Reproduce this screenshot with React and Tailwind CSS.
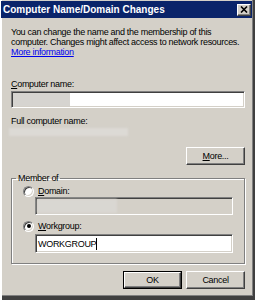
import React from 'react';

const font = { fontFamily: '"Liberation Sans", Arial, sans-serif' };

const sunken = 'border border-t-[#808080] border-l-[#808080] border-b-white border-r-white shadow-[inset_1px_1px_0_#404040,inset_-1px_-1px_0_#d4d0c8]';
const raised = 'border border-t-white border-l-white border-b-[#404040] border-r-[#404040] shadow-[inset_-1px_-1px_0_#808080]';
const txt = 'text-[9px] leading-[10px] tracking-[-0.3px] whitespace-nowrap';

const Radio = ({ checked }) => (
  <span className="w-[11px] h-[11px] rounded-full bg-white border border-t-[#808080] border-l-[#808080] border-b-white border-r-white shadow-[inset_1px_1px_0_#404040,inset_-1px_-1px_0_#d4d0c8] flex items-center justify-center shrink-0">
    {checked && <span className="w-[4px] h-[4px] rounded-full bg-black" />}
  </span>
);

const Button = ({ children, isDefault }) => (
  <div className={`w-[59px] h-[18px] ${isDefault ? 'border border-black' : ''}`}>
    <div className={`w-full h-full ${raised} flex items-center justify-center ${txt}`}>
      {children}
    </div>
  </div>
);

export default function App() {
  return (
    <div
      style={font}
      className="w-[255px] h-[300px] bg-[#d4d0c8] flex flex-col overflow-hidden shadow-[inset_2px_0_0_#fff,inset_-2px_-4px_0_#404040,inset_-3px_-5px_0_#808080] text-black"
    >
      {/* title bar */}
      <div className="mt-[1px] ml-[1px] mr-[3px] h-[17px] bg-[#0a246a] flex items-center justify-between pl-[2px] pr-[1px]">
        <span className="text-white font-bold text-[10px] leading-none">Computer Name/Domain Changes</span>
        <div className={`w-[14px] h-[12px] bg-[#d4d0c8] ${raised} flex items-center justify-center`}>
          <svg width="8" height="7" viewBox="0 0 8 7">
            <path d="M1 0.5 L7 6.5 M7 0.5 L1 6.5" stroke="#000" strokeWidth="1.6" />
          </svg>
        </div>
      </div>

      <div className="flex flex-col px-[11px] pr-[10px]">
        <p className={`mt-[9px] ${txt}`}>
          You can change the name and the membership of this
          <br />
          computer. Changes might affect access to network resources.
          <br />
          <span className="text-[#0000ee] underline">More information</span>
        </p>

        <div className={`mt-[22px] ${txt}`}>
          <span className="underline">C</span>omputer name:
        </div>
        <div className={`mt-[2px] h-[17px] bg-white ${sunken} flex`}>
          <div className="ml-[1px] mt-[1px] w-[57px] h-[13px] bg-[#d6d4d0] blur-[0.6px]" />
        </div>

        <div className={`mt-[8px] ${txt}`}>Full computer name:</div>
        <div className="mt-[2px] -ml-[2px] w-[119px] h-[8px] bg-[#dcdad5] blur-[1px]" />

        <div className="mt-[11px] self-end">
          <Button>
            <span><span className="underline">M</span>ore...</span>
          </Button>
        </div>

        <fieldset className="mt-[8px] border border-[#808080] shadow-[inset_1px_1px_0_#fff,1px_1px_0_#fff] pl-[11px] pt-[3px] pb-[9px] h-[91px]">
          <legend className={`-ml-[7px] px-[2px] ${txt}`}>Member of</legend>

          <div className="flex items-center gap-[3px] h-[10px]">
            <Radio />
            <span className={`ml-[1px] ${txt}`}><span className="underline">D</span>omain:</span>
          </div>
          <div className={`mt-[1px] ml-[12px] w-[198px] h-[18px] bg-[#d4d0c8] ${sunken} flex`}>
            <div className="ml-[1px] mt-[1px] w-[80px] h-[14px] bg-[#d9d7d2] blur-[1px]" />
          </div>

          <div className="mt-[6px] flex items-center gap-[3px] h-[10px]">
            <Radio checked />
            <span className={`ml-[1px] ${txt}`}><span className="underline">W</span>orkgroup:</span>
          </div>
          <div className={`mt-[3px] ml-[12px] w-[198px] h-[19px] bg-white ${sunken} flex items-center pl-[2px]`}>
            <span className={txt}>WORKGROUP</span>
            <span className="w-[1px] h-[12px] bg-black" />
          </div>
        </fieldset>

        <div className="mt-[7px] flex justify-end gap-[4px]">
          <Button isDefault>OK</Button>
          <Button>Cancel</Button>
        </div>
      </div>
    </div>
  );
}
